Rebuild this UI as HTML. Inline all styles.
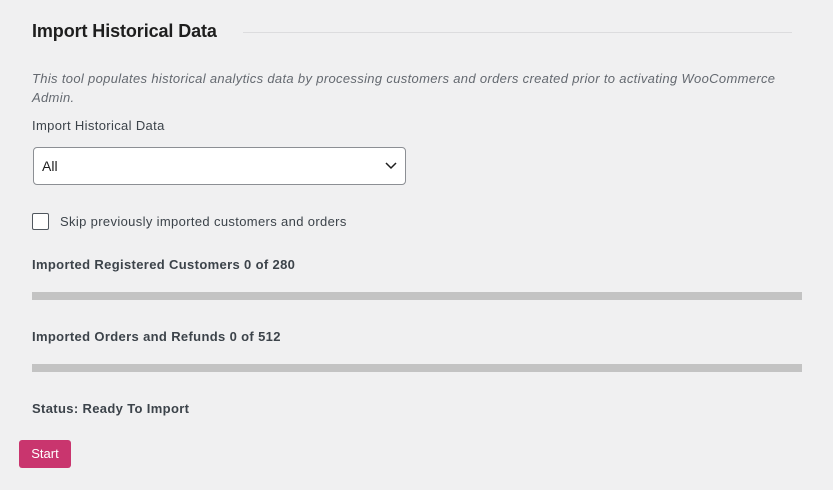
<!DOCTYPE html>
<html><head><style>
body{margin:0;width:833px;height:490px;background:#f0f0f1;font-family:"Liberation Sans",sans-serif;color:#1e1e1e;position:relative;overflow:hidden}
.a{position:absolute;white-space:nowrap}
.t{letter-spacing:0.35px}
</style></head><body>
<div class="a" style="left:32px;top:21px;font-size:18px;font-weight:bold;color:#1e1e1e;letter-spacing:-0.1px">Import Historical Data</div>
<div class="a" style="left:243px;top:32px;width:549px;height:1px;background:#dcdcde"></div>
<div class="a" style="left:32px;top:69px;font-size:13px;font-style:italic;color:#646970;line-height:19px;letter-spacing:0.33px">This tool populates historical analytics data by processing customers and orders created prior to activating WooCommerce<br>Admin.</div>
<div class="a t" style="left:32px;top:118px;font-size:13px;color:#3c434a">Import Historical Data</div>
<div class="a" style="left:33px;top:147px;width:371px;height:36px;border:1px solid #8c8f94;border-radius:4px;background:#fff"></div>
<div class="a" style="left:42px;top:158px;font-size:14px;color:#1e1e1e">All</div>
<svg class="a" style="left:384px;top:161px" width="14" height="10"><path d="M2 2l5 5 5-5" stroke="#1e1e1e" stroke-width="1.5" fill="none"/></svg>
<div class="a" style="left:32px;top:213px;width:15px;height:15px;border:1.5px solid #50575e;border-radius:2px;background:#fff"></div>
<div class="a t" style="left:60px;top:214px;font-size:13px;color:#3c434a">Skip previously imported customers and orders</div>
<div class="a t" style="left:32px;top:257px;font-size:13px;font-weight:bold;color:#3c434a">Imported Registered Customers 0 of 280</div>
<div class="a" style="left:32px;top:292px;width:770px;height:8px;background:#c3c3c3"></div>
<div class="a t" style="left:32px;top:329px;font-size:13px;font-weight:bold;color:#3c434a">Imported Orders and Refunds 0 of 512</div>
<div class="a" style="left:32px;top:364px;width:770px;height:8px;background:#c3c3c3"></div>
<div class="a t" style="left:32px;top:401px;font-size:13px;font-weight:bold;color:#3c434a">Status: Ready To Import</div>
<div class="a" style="left:19px;top:440px;width:52px;height:28px;background:#c9356e;border-radius:3px;color:#fff;font-size:13px;line-height:28px;text-align:center">Start</div>
</body></html>
